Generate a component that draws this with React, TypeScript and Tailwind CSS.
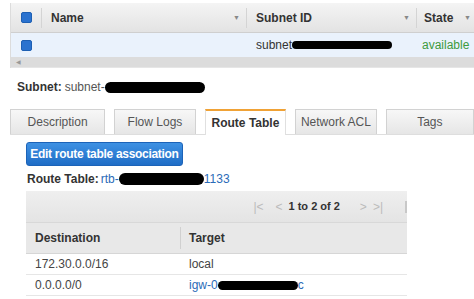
import React from 'react';

function Check() {
  return <div className="w-[11px] h-[11px] rounded-[2px] bg-[#2a72cf] border border-[#1d5fb3]" />;
}

function Caret() {
  return <span className="text-[7px] text-[#888] leading-none">▼</span>;
}

function Scribble({ w, h = 9 }: { w: number; h?: number }) {
  return (
    <span
      className="inline-block bg-black rounded-full align-middle"
      style={{ width: w, height: h }}
    />
  );
}

const TABS = ['Description', 'Flow Logs', 'Route Table', 'Network ACL', 'Tags'];
const TAB_W = [97, 83, 83, 83, 90];

export default function App() {
  return (
    <div
      className="w-[474px] h-[299px] overflow-hidden bg-white text-[12px] text-[#444]"
      style={{ fontFamily: '"Liberation Sans", Arial, sans-serif' }}
    >
      {/* top grid */}
      <div className="pl-[10px] pt-[3px]">
        <div className="border-l border-[#dcdcdc] w-[464px]">
          <div className="flex h-[30px] items-center bg-gradient-to-b from-[#f4f4f4] to-[#e3e3e3] border-b border-[#cfcfcf]">
            <div className="w-[30px] flex justify-center"><Check /></div>
            <div className="w-[205px] h-[20px] border-l border-[#d4d4d4] flex items-center justify-between pl-[9px] pr-[6px]">
              <span className="font-bold text-[#333]">Name</span>
              <Caret />
            </div>
            <div className="w-[170px] h-[20px] border-l border-[#d4d4d4] flex items-center justify-between pl-[9px] pr-[6px]">
              <span className="font-bold text-[#333]">Subnet ID</span>
              <Caret />
            </div>
            <div className="flex-1 h-[20px] border-l border-[#d4d4d4] flex items-center justify-between pl-[7px] pr-[3px]">
              <span className="font-bold text-[#333]">State</span>
              <Caret />
            </div>
          </div>
          <div className="flex h-[24px] items-center bg-[#eaf2fc]">
            <div className="w-[30px] flex justify-center"><Check /></div>
            <div className="w-[205px]" />
            <div className="w-[170px] pl-[10px] flex items-center text-[#333]">
              subnet<Scribble w={100} h={8} />
            </div>
            <div className="flex-1 pl-[6px] text-[#3d9b3d]">available</div>
          </div>
          <div className="h-[11px] bg-[#dcdcdc] border-b border-[#e6e6e6] flex items-center pl-[5px]">
            <span className="text-[6px] text-[#999]">◀</span>
          </div>
        </div>
      </div>

      {/* subnet title */}
      <div className="pl-[17px] pt-[12px] flex items-center h-[26px]">
        <span className="font-bold text-[#333]">Subnet:</span>
        <span className="ml-[3px] text-[#555]">subnet-</span>
        <Scribble w={100} h={11} />
      </div>

      {/* tabs */}
      <div className="mt-[16px] ml-[10px] flex gap-[9px] border-b border-[#dedede] h-[25px] items-end">
        {TABS.map((t, i) =>
          t === 'Route Table' ? (
            <div
              key={t}
              className="h-[26px] -mb-px bg-white border-t-2 border-[#f0a236] border-x border-x-[#e0e0e0] flex items-center justify-center font-bold text-[#333]"
              style={{ width: TAB_W[i] }}
            >
              {t}
            </div>
          ) : (
            <div
              key={t}
              className="h-[25px] bg-gradient-to-b from-[#f7f7f7] to-[#e6e6e6] border border-b-0 border-[#d2d2d2] flex items-center justify-center text-[#555]"
              style={{ width: TAB_W[i] }}
            >
              {t}
            </div>
          )
        )}
      </div>

      {/* content */}
      <div className="pl-[26px] pt-[7px]">
        <div className="w-[157px] h-[24px] rounded-[3px] bg-gradient-to-b from-[#3e91e3] to-[#1f6dc6] border border-[#1c63b8] flex items-center justify-center text-white font-bold text-[12px] whitespace-nowrap tracking-[-0.3px]">
          Edit route table association
        </div>
        <div className="flex items-center h-[25px] pl-[1px]">
          <span className="font-bold text-[#333]">Route Table:</span>
          <span className="ml-[2px] text-[#2b6bb8]">rtb-</span>
          <Scribble w={85} h={12} />
          <span className="text-[#2b6bb8]">1133</span>
        </div>

        <div className="w-[381px]">
          <div className="h-[32px] bg-gradient-to-b from-[#efefef] to-[#e4e4e4] border-b border-[#d8d8d8] flex items-center justify-end pr-[24px] text-[#bbb] relative">
            <span className="text-[12px]">|&lt;</span>
            <span className="text-[12px] ml-[12px]">&lt;</span>
            <span className="font-bold text-[#333] text-[11px] ml-[6px]">1 to 2 of 2</span>
            <span className="text-[12px] ml-[20px]">&gt;</span>
            <span className="text-[12px] ml-[6px]">&gt;|</span>
            <div className="absolute right-0 top-[10px] w-[2px] h-[12px] bg-[#c8c8c8]" />
          </div>
          <div className="h-[31px] bg-[#e8e8e8] border-b border-[#d6d6d6] flex items-center">
            <div className="w-[154px] pl-[9px] font-bold text-[#333]">Destination</div>
            <div className="h-[22px] border-l border-[#d0d0d0] pl-[8px] flex items-center font-bold text-[#333]">Target</div>
          </div>
          <div className="h-[21px] border-b border-[#e6e6e6] flex items-center">
            <div className="w-[154px] pl-[9px]">172.30.0.0/16</div>
            <div className="pl-[9px]">local</div>
          </div>
          <div className="h-[21px] border-b border-[#e6e6e6] flex items-center">
            <div className="w-[154px] pl-[9px]">0.0.0.0/0</div>
            <div className="pl-[9px] flex items-center text-[#2b6bb8]">
              igw-0<Scribble w={80} h={9} />c
            </div>
          </div>
        </div>
      </div>
    </div>
  );
}
